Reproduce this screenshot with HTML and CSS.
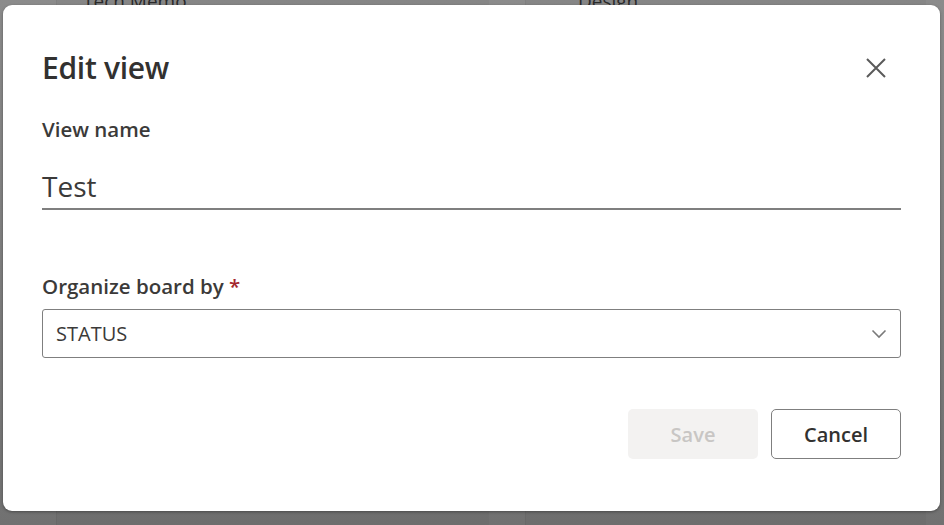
FILE: index.html
```html
<!DOCTYPE html>
<html lang="en">
<head>
    <meta charset="UTF-8">
    <meta name="viewport" content="width=device-width, initial-scale=1.0">
    <title>Edit view</title>
    <link rel="stylesheet" href="styles.css">
</head>
<body>

<div class="board">
    <div class="column col-a"><div class="col-title">Tech Memo</div></div>
    <div class="column col-b"><div class="col-title">Design</div></div>
</div>

<div class="overlay">
    <div class="dialog">
        <div class="dialog-header">
            <h2 class="dialog-title">Edit view</h2>
            <button class="close-btn" aria-label="Close">
                <svg width="22" height="22" viewBox="0 0 22 22">
                    <path d="M2 2 L20 20 M20 2 L2 20" stroke="#5a5a5a" stroke-width="2" fill="none"/>
                </svg>
            </button>
        </div>

        <div class="field">
            <label class="field-label">View name</label>
            <div class="text-input">Test</div>
        </div>

        <div class="field field-select">
            <label class="field-label">Organize board by <span class="required">*</span></label>
            <div class="select">
                <span>STATUS</span>
                <svg width="16" height="10" viewBox="0 0 16 10">
                    <path d="M1.5 1.5 L8 8 L14.5 1.5" stroke="#7a7a7a" stroke-width="1.6" fill="none"/>
                </svg>
            </div>
        </div>

        <div class="dialog-footer">
            <button class="btn btn-save" disabled>Save</button>
            <button class="btn btn-cancel">Cancel</button>
        </div>
    </div>
</div>

</body>
</html>
```

FILE: styles.css
```css
body {
    margin: 0;
    width: 944px;
    height: 525px;
    overflow: hidden;
    background: linear-gradient(#8b8b8b, #717171);
    font-family: "Open Sans", "Noto Sans", sans-serif;
    position: relative;
}

.board {
    display: flex;
    gap: 36px;
    padding-left: 56px;
    height: 100%;
}

.column {
    width: 432px;
    background: rgba(0, 0, 0, 0.03);
    border-left: 1px solid rgba(0, 0, 0, 0.04);
}

.col-b {
    width: 400px;
}

.col-title {
    margin-top: -12px;
    padding-left: 26px;
    font-size: 19px;
    color: #2a2a2a;
}

.col-b .col-title {
    padding-left: 52px;
}

.overlay {
    position: absolute;
    top: 5px;
    left: 3px;
}

.dialog {
    width: 937px;
    height: 506px;
    box-sizing: border-box;
    padding: 44px 39px 0 39px;
    background: #fff;
    border-radius: 9px;
    box-shadow: 0 1px 3px rgba(0, 0, 0, 0.35);
    color: #323130;
}

.dialog-header {
    display: flex;
    justify-content: space-between;
    align-items: center;
}

.dialog-title {
    margin: 0;
    font-size: 30px;
    font-weight: 600;
    line-height: 38px;
    letter-spacing: -0.3px;
}

.close-btn {
    border: none;
    background: none;
    padding: 0;
    margin-right: 14px;
    width: 22px;
    height: 22px;
    display: flex;
}

.field {
    margin-top: 29px;
}

.field-label {
    display: block;
    font-size: 20.5px;
    font-weight: 600;
    line-height: 26px;
    color: #3b3a39;
}

.required {
    color: #a4262c;
}

.text-input {
    margin-top: 27px;
    font-size: 28px;
    line-height: 34px;
    padding-bottom: 5px;
    border-bottom: 2px solid #7f7f7f;
    color: #3b3a39;
}

.field-select {
    margin-top: 63px;
}

.select {
    margin-top: 10px;
    height: 49px;
    box-sizing: border-box;
    border: 1.5px solid #7f7f7f;
    border-radius: 3px;
    display: flex;
    align-items: center;
    justify-content: space-between;
    padding: 0 13px 0 13px;
    font-size: 20px;
    color: #3b3a39;
}

.dialog-footer {
    margin-top: 51px;
    display: flex;
    justify-content: flex-end;
    gap: 13px;
}

.btn {
    width: 130px;
    height: 50px;
    border-radius: 5px;
    font-family: "Open Sans", "Noto Sans", sans-serif;
    font-size: 20px;
    font-weight: 600;
}

.btn-save {
    background: #f3f2f1;
    border: none;
    color: #c8c6c4;
}

.btn-cancel {
    background: #fff;
    border: 1.5px solid #7f7f7f;
    color: #323130;
}
```
